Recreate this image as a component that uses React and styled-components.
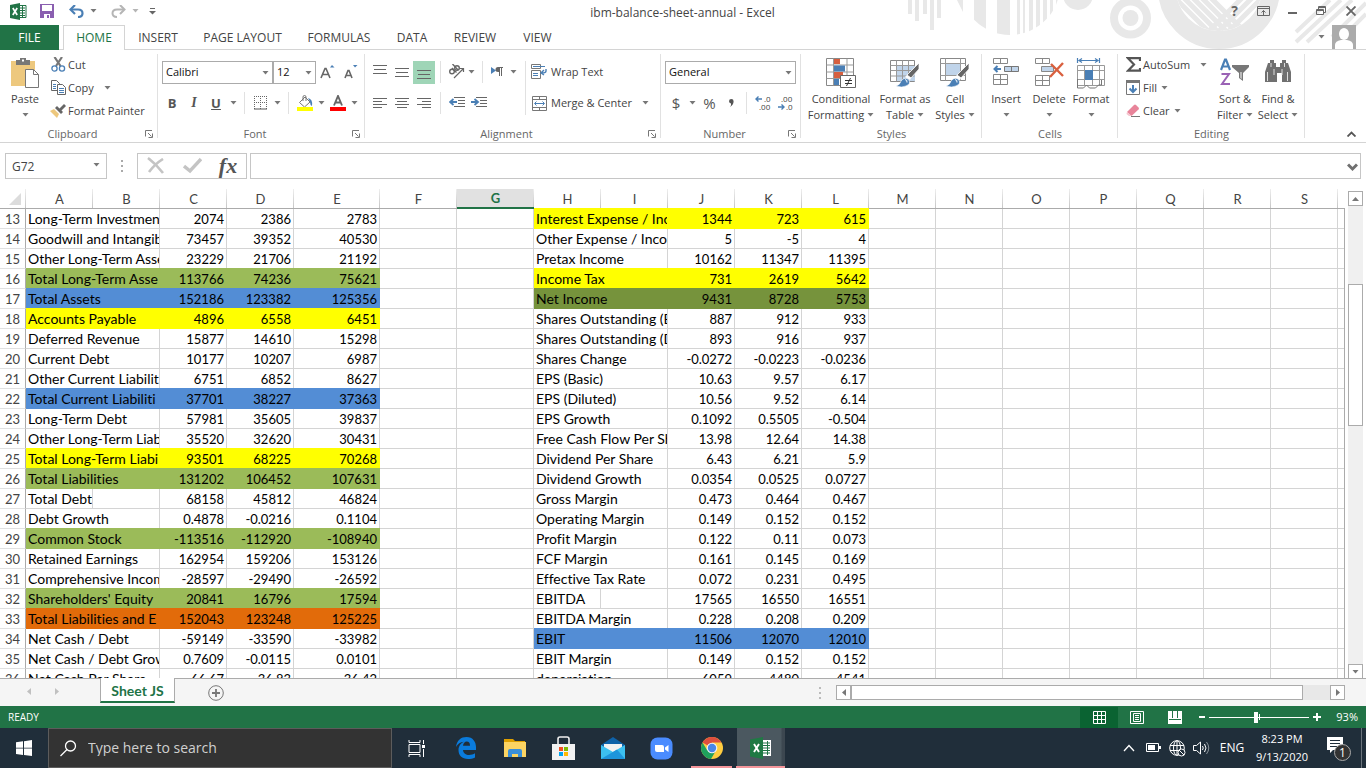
import React from "react";
import styled, { createGlobalStyle, css } from "styled-components";

const GREEN = "#217346";
const GREY = "#777777";
const BLUE = "#4a7fb5";
const UI_FONT = '"Open Sans", "Noto Sans", sans-serif';
const CELL_FONT = 'Lato, "Open Sans", sans-serif';

const GlobalStyle = createGlobalStyle`
  * { box-sizing: border-box; }
  html, body, #root { margin: 0; height: 100%; }
  body { background: #fff; color: #444; font: 11px/16px ${UI_FONT}; overflow: hidden; }
  button, select, input { font: inherit; color: inherit; margin: 0; padding: 0; border: 0; background: none; border-radius: 0; }
  svg { display: block; flex: none; }
`;

const Window = styled.div`
  display: flex;
  flex-direction: column;
  min-height: 100%;
  height: 100vh;
`;

/* ---------- window header ---------- */
const Header = styled.header`
  position: relative;
  flex: none;
  isolation: isolate;
`;
const HeaderArt = styled.svg`
  position: absolute;
  right: 0;
  top: 0;
  z-index: -1;
`;
const TitleBar = styled.div`
  display: grid;
  grid-template-columns: 1fr auto 1fr;
  align-items: center;
  height: 25px;
  padding: 0 1px 0 0;
`;
const QuickAccess = styled.div`
  display: flex;
  align-items: center;
  height: 22px;
  margin-bottom: 3px;
  padding-left: 10px;
`;
const QuickButton = styled.button`
  display: flex;
  align-items: center;
  gap: 6px;
  margin-right: ${(p) => p.$after}px;
`;
const Title = styled.h1`
  margin: 0;
  font: 400 12px/24px ${UI_FONT};
`;
const WindowButtons = styled.div`
  display: flex;
  justify-content: flex-end;
  height: 22px;
  margin-bottom: 3px;
`;
const WindowButton = styled.button`
  width: 29px;
  display: flex;
  align-items: center;
  justify-content: center;
  font-weight: 700;
  font-size: 14px;
  color: #666;
`;
const TabRow = styled.nav`
  display: flex;
  height: 25px;
  border-bottom: 1px solid #d4d4d4;
`;
const FileTab = styled.button`
  width: 59px;
  height: 25px;
  background: ${GREEN};
  color: #fff;
  font-size: 12px;
`;
const RibbonTab = styled.button`
  width: ${(p) => p.$w}px;
  height: 25px;
  font-size: 12px;
  white-space: nowrap;
  ${(p) =>
    p.$active &&
    css`
      margin: 0 0 0 4px;
      color: ${GREEN};
      background: #fff;
      border: 1px solid #d4d4d4;
      border-bottom: 0;
    `}
`;
const Account = styled.button`
  margin-left: auto;
  margin-right: 10px;
  height: 24px;
  display: flex;
  align-items: center;
  gap: 7px;
`;

/* ---------- ribbon ---------- */
const Ribbon = styled.div`
  display: flex;
  flex: none;
  height: 93px;
  border-bottom: 1px solid #d4d4d4;
`;
const Group = styled.section`
  width: ${(p) => p.$w}px;
  flex: none;
  display: flex;
  flex-direction: column;
  padding-top: 3px;
  background: linear-gradient(#e1e1e1, #e1e1e1) no-repeat right center / 1px 84px;
`;
const GroupBody = styled.div`
  display: flex;
  flex: none;
  height: 73px;
  padding-left: ${(p) => p.$pl || 0}px;
`;
const GroupFoot = styled.div`
  display: flex;
  align-items: center;
  height: 16px;
  color: #666;
`;
const GroupName = styled.span`
  flex: 1;
  text-align: center;
`;
const Launcher = styled.button`
  width: 13px;
`;
const RibbonEnd = styled.div`
  flex: 1;
  display: flex;
  justify-content: flex-end;
  align-items: flex-end;
  padding: 0 10px 5px 0;
`;
const BigButton = styled.button`
  width: ${(p) => p.$w}px;
  display: flex;
  flex-direction: column;
  align-items: center;
  padding-top: 5px;
  white-space: nowrap;
`;
const BigIcon = styled.span`
  height: 33px;
`;
const BigLine = styled.span`
  display: flex;
  align-items: center;
  gap: 3px;
  height: 16px;
`;
const SmallColumn = styled.div`
  display: flex;
  flex-direction: column;
  align-items: flex-start;
  width: ${(p) => p.$w}px;
`;
const SmallButton = styled.button`
  display: flex;
  align-items: center;
  gap: ${(p) => p.$gap || 2}px;
  height: ${(p) => p.$h || 23}px;
  white-space: nowrap;
`;
const SmallLabel = styled.span`
  display: flex;
  align-items: center;
  gap: ${(p) => (p.$far ? 10 : 4)}px;
`;
const IconSlot = styled.span`
  width: 16px;
  display: flex;
  justify-content: center;
`;
const ToolRows = styled.div`
  display: flex;
  flex-direction: column;
  gap: 7px;
  padding-top: 7px;
`;
const ToolRow = styled.div`
  display: flex;
  align-items: center;
  height: 24px;
`;
const Tool = styled.button`
  width: ${(p) => p.$w || 22}px;
  height: 23px;
  display: flex;
  align-items: center;
  justify-content: center;
  font-size: ${(p) => p.$size || 13}px;
  font-weight: ${(p) => p.$weight || 400};
  color: #555;
  background: ${(p) => (p.$active ? "#9fd5b7" : "none")};
`;
const SerifMark = styled.i`
  font-family: "Liberation Serif", serif;
`;
const Divider = styled.span`
  width: 1px;
  height: ${(p) => p.$h || 22}px;
  margin: ${(p) => p.$mt || 0}px 5px 0;
  background: #e1e1e1;
`;
const SelectBox = styled.label`
  position: relative;
  width: ${(p) => p.$w}px;
  height: 23px;
  margin-left: ${(p) => p.$ml || 0}px;
  svg { position: absolute; right: 4px; top: 10px; pointer-events: none; }
`;
const Select = styled.select`
  appearance: none;
  width: 100%;
  height: 100%;
  padding-left: 3px;
  border: 1px solid #ababab;
  background: #fff;
  color: #111;
`;

/* ---------- formula bar ---------- */
const FormulaBar = styled.div`
  display: flex;
  flex: none;
  align-items: center;
  height: 46px;
  padding: 0 5px;
`;
const NameBox = styled.label`
  position: relative;
  width: 102px;
  height: 26px;
  svg { position: absolute; right: 7px; top: 10px; }
`;
const NameInput = styled.input`
  width: 100%;
  height: 100%;
  padding-left: 6px;
  border: 1px solid #c6c6c6;
  font-size: 12px;
`;
const Grip = styled.span`
  width: 30px;
  display: flex;
  justify-content: center;
`;
const FormulaTools = styled.div`
  width: 110px;
  height: 26px;
  display: flex;
  border: 1px solid #c6c6c6;
`;
const FormulaInputBox = styled.label`
  position: relative;
  flex: 1;
  height: 26px;
  margin-left: 3px;
  svg { position: absolute; right: 3px; top: 10px; }
`;
const FormulaInput = styled.input`
  width: 100%;
  height: 100%;
  border: 1px solid #c6c6c6;
`;

/* ---------- worksheet ---------- */
const SheetArea = styled.main`
  flex: 1;
  min-height: 0;
  display: flex;
  border-bottom: 1px solid #ababab;
`;
const GridWrap = styled.div`
  flex: 1;
  min-width: 0;
  overflow: hidden;
  background: linear-gradient(#ababab, #ababab) no-repeat right 19px / 1px 100%;
  padding-right: 1px;
`;
const Grid = styled.table`
  width: 100%;
  table-layout: fixed;
  border-collapse: separate;
  border-spacing: 0;
  font: 13px/19px ${CELL_FONT};
  font-variant-ligatures: none;
  color: #000;
`;
const ColHead = styled.th`
  height: 20px;
  padding: 1px 0 0;
  font-weight: ${(p) => (p.$active ? 700 : 400)};
  line-height: 17px;
  color: ${(p) => (p.$active ? GREEN : "#444")};
  border-bottom: ${(p) => (p.$active ? `2px solid ${GREEN}` : "1px solid #ababab")};
  background: linear-gradient(#eee, #c6c6c6) no-repeat right top / ${(p) => (p.$last ? 0 : 1)}px 100%;
  background-color: ${(p) => (p.$active ? "#e1e1e1" : "#fff")};
`;
const RowHead = styled.th`
  height: 20px;
  padding: 1px 0 0;
  line-height: 18px;
  font-weight: 400;
  color: #444;
  border-right: 1px solid #ababab;
  border-bottom: 1px solid #e1e1e1;
`;
const Cell = styled.td`
  height: 20px;
  padding: 1px 2px 0;
  line-height: 18px;
  overflow: hidden;
  white-space: nowrap;
  font-size: ${(p) => (p.$num ? 13 : 14)}px;
  text-align: ${(p) => (p.$num ? "right" : "left")};
  border-right: ${(p) => (p.$last ? 0 : 1)}px solid ${(p) => p.$fill || "#d4d4d4"};
  border-bottom: 1px solid ${(p) => p.$fill || "#d4d4d4"};
  ${(p) =>
    p.$fill &&
    css`
      background: ${p.$fill};
      box-shadow: 0 -1px 0 ${p.$fill};
    `}
`;
const VScroll = styled.div`
  width: 15px;
  margin: 2px 3px -1px;
  display: flex;
  flex-direction: column;
  background: #f0f0f0;
`;
const ScrollButton = styled.button`
  width: 15px;
  height: 15px;
  flex: none;
  display: flex;
  align-items: center;
  justify-content: center;
  border: 1px solid #ababab;
  background: #fff;
`;
const VBefore = styled.div`
  flex: 78;
`;
const VThumb = styled.div`
  flex: 141;
  border: 1px solid #ababab;
  background: #fff;
`;
const VAfter = styled.div`
  flex: 239;
`;

/* ---------- sheet tabs ---------- */
const TabBar = styled.div`
  flex: none;
  display: flex;
  height: 27px;
  background: #f5f5f5;
`;
const TabArrows = styled.div`
  width: 100px;
  display: flex;
  align-items: center;
  gap: 24px;
  padding: 0 0 2px 27px;
`;
const SheetTab = styled.button`
  position: relative;
  width: 75px;
  height: 25px;
  margin-top: -1px;
  padding-top: 2px;
  background: #fff;
  border: 1px solid #ababab;
  border-top: 0;
  border-bottom: 2px solid ${GREEN};
  font: 700 14px/20px ${CELL_FONT};
  color: ${GREEN};
`;
const AddSheet = styled.button`
  width: 16px;
  margin-left: 33px;
`;
const HScroll = styled.div`
  margin-left: auto;
  margin-right: 21px;
  width: 39%;
  height: 15px;
  margin-top: 6px;
  display: flex;
  background: #e8e8e8;
`;
const HThumb = styled.div`
  flex: 1;
  margin-right: 27px;
  background: #fff;
  border: 1px solid #ababab;
`;
const HGrip = styled.span`
  width: 24px;
  padding-left: 7px;
  background: #f5f5f5;
`;

/* ---------- status bar ---------- */
const StatusBar = styled.div`
  flex: none;
  display: flex;
  align-items: center;
  height: 22px;
  padding: 0 8px;
  background: ${GREEN};
  color: #fff;
`;
const StatusText = styled.span`
  margin-right: auto;
  font-size: 10px;
`;
const ViewButton = styled.button`
  width: 38px;
  height: 21px;
  display: flex;
  align-items: center;
  justify-content: center;
  background: ${(p) => (p.$active ? "#0a6332" : "none")};
`;
const ZoomButton = styled.button`
  width: 15px;
  display: flex;
  justify-content: center;
`;
const ZoomRange = styled.input`
  appearance: none;
  width: 100px;
  height: 12px;
  background:
    linear-gradient(#fff, #fff) no-repeat center / 1px 6px,
    linear-gradient(#fff, #fff) no-repeat center / 100% 1px;
  &::-webkit-slider-thumb {
    appearance: none;
    width: 4px;
    height: 11px;
    background: #fff;
  }
`;
const ZoomLevel = styled.span`
  width: 34px;
  text-align: right;
`;

/* ---------- taskbar ---------- */
const Taskbar = styled.footer`
  flex: none;
  display: flex;
  height: 40px;
  background: #202e3a;
  color: #fff;
`;
const StartButton = styled.button`
  width: 48px;
  display: flex;
  align-items: center;
  justify-content: center;
`;
const SearchBox = styled.label`
  width: 344px;
  display: flex;
  align-items: center;
  gap: 11px;
  padding-left: 11px;
  background: #333;
  border: 1px solid #5c5c5c;
`;
const SearchInput = styled.input`
  flex: 1;
  min-width: 0;
  font-size: 14px;
  &::placeholder { color: #d0d0d0; opacity: 1; }
`;
const TaskButton = styled.button`
  width: 49px;
  display: flex;
  align-items: center;
  justify-content: center;
  background: ${(p) => (p.$active ? "linear-gradient(90deg, #4b5860 44px, #3c4750 45px) no-repeat 1px 0 / 48px 100%" : "none")};
  ${(p) => p.$open && css`box-shadow: inset 0 -2px 0 #f4959a;`}
`;
const OpenButton = styled(TaskButton)`
  width: 41px;
  margin: 0 4px 0 5px;
`;
const Tray = styled.div`
  margin-left: auto;
  display: flex;
  align-items: center;
`;
const TrayButton = styled.button`
  width: 24px;
  display: flex;
  justify-content: center;
`;
const Language = styled.button`
  width: 38px;
  font-size: 12px;
`;
const Clock = styled.button`
  width: 62px;
  text-align: center;
  line-height: 18px;
`;
const NoticeButton = styled.button`
  width: 48px;
  padding-left: 4px;
  display: flex;
  justify-content: center;
`;
const ShowDesktop = styled.button`
  width: 5px;
  height: 40px;
  border-left: 1px solid #6b747c;
`;

/* ---------- small drawings ---------- */
const Caret = ({ c = GREY }) => (
  <svg width="7" height="4" viewBox="0 0 7 4"><path d="M0.500 0h6L3.500 3.500z" fill={c} /></svg>
);
const CaretTool = ({ w = 11, label }) => (
  <Tool $w={w} aria-label={label}><Caret /></Tool>
);
const Svg = ({ w, h = w, children }) => (
  <svg width={w} height={h} viewBox={`0 0 ${w} ${h}`} fill="none">{children}</svg>
);
const ExcelIcon = () => (
  <Svg w={17} h={17}>
    <path d="M9 2.500h7v12H9z" fill="#fff" stroke={GREEN} />
    <path d="M10 5h5M10 7.500h5M10 10h5M10 12.500h5M12.500 3v11" stroke={GREEN} />
    <path d="M0 2l10-2v17L0 15z" fill={GREEN} />
    <path d="M2.800 5l4.400 7M7.200 5l-4.400 7" stroke="#fff" strokeWidth="1.700" />
  </Svg>
);
const SaveIcon = () => (
  <Svg w={14}>
    <path d="M0 0h14v14H0z" fill="#8a5fb0" />
    <path d="M2 1h10v6H2zM4 10h6v4H4z" fill="#fff" />
    <path d="M7 11h2v3H7z" fill="#8a5fb0" />
  </Svg>
);
const UndoIcon = ({ c }) => (
  <Svg w={15} h={13}>
    <path d="M2 4.500h7c3 0 4.500 1.800 4.500 3.800S12 12 9 12" stroke={c} strokeWidth="2.200" />
    <path d="M6 0L1.500 4.500L6 9" stroke={c} strokeWidth="2.200" />
  </Svg>
);
const RedoIcon = ({ c }) => (
  <Svg w={15} h={13}>
    <path d="M13 4.500H6C3 4.500 1.500 6.300 1.500 8.300S3 12 6 12" stroke={c} strokeWidth="2" />
    <path d="M9 0l4.500 4.500L9 9" stroke={c} strokeWidth="2" />
  </Svg>
);
const Lines = ({ rows }) => (
  <Svg w={14} h={14}>
    {rows.map(([x1, x2, y]) => <path key={y} d={`M${x1} ${y}.5H${x2}`} stroke="#666" />)}
  </Svg>
);
const LauncherIcon = () => (
  <Svg w={8}><path d="M.5 6.500V.5H7M3 3l3.500 3.500M7.500 3.500v4h-4" stroke={GREY} /></Svg>
);
const PasteIcon = () => (
  <Svg w={30} h={32}>
    <path d="M1 3h24v25H1z" fill="#edc87e" />
    <path d="M6 2h4V0h6v2h4v5H6z" fill="#777" />
    <path d="M12 1.500h2v2h-2z" fill="#fff" />
    <path d="M15.500 11.500h8l5 5v13h-13z" fill="#fff" stroke="#777" />
    <path d="M23.500 11.500v5h5" stroke="#777" />
  </Svg>
);
const CutIcon = () => (
  <Svg w={15} h={15}>
    <path d="M3.500 0l6 9M11 0L5 9" stroke="#777" strokeWidth="2.200" />
    <circle cx="3.500" cy="11.500" r="2.600" stroke={BLUE} strokeWidth="1.300" />
    <circle cx="11" cy="11.500" r="2.600" stroke={BLUE} strokeWidth="1.300" />
  </Svg>
);
const CopyIcon = () => (
  <Svg w={15} h={15}>
    <path d="M.5.5h5l3 3v7h-8z" stroke="#666" fill="#fff" />
    <path d="M2 4.500h3M2 6.500h3M2 8.500h3" stroke={BLUE} />
    <path d="M6.500 4.500h5l3 3v7h-8z" stroke="#666" fill="#fff" />
    <path d="M8 8.500h5M8 10.500h5M8 12.500h5" stroke={BLUE} />
  </Svg>
);
const PainterIcon = () => (
  <Svg w={16} h={14}>
    <path d="M0 7l4-2 5 5-2 4z" fill="#edc87e" />
    <path d="M5 4l2-2 6 6-2 2z" fill="#666" />
    <path d="M9 5l5-5 2 2-5 5z" fill="#666" />
  </Svg>
);
const GrowFont = ({ up }) => (
  <Svg w={16} h={16}>
    {up ? (
      <>
        <path d="M1 14L5 4.500h1L10 14M3 10.500h5" stroke="#666" strokeWidth="1.600" />
        <path d="M10 3.500L12 1l2.500 2.500z" fill={BLUE} />
      </>
    ) : (
      <>
        <path d="M2 14L5 6.500h1L9 14M3.500 11.500h4" stroke="#666" strokeWidth="1.600" />
        <path d="M10 1h4.500L12 3.500z" fill={BLUE} />
      </>
    )}
  </Svg>
);
const BordersIcon = () => (
  <Svg w={14}>
    <path d="M.5 0v13M6.500 0v13M12.500 0v13M0 .5h13M0 6.500h13" stroke="#666" strokeDasharray="1 1" />
    <path d="M0 13h13" stroke="#555" />
  </Svg>
);
const BucketIcon = () => (
  <Svg w={16} h={16}>
    <path d="M2.500 7.500L8 2l5 5-5.500 5z" stroke="#777" fill="#fff" />
    <path d="M6 6V2q0-1.500 1.500-1.500T9 2v4" stroke="#777" />
    <path d="M11 3q5 1 4 8-2-1-2-4z" fill={BLUE} />
    <path d="M0 12h16v4H0z" fill="#ff0" />
  </Svg>
);
const FontColorIcon = () => (
  <Svg w={16} h={16}>
    <path d="M4 10.500L8 1l4 9.500M5.500 7.500h5" stroke="#666" strokeWidth="1.900" />
    <path d="M0 12h16v4H0z" fill="#f00" />
  </Svg>
);
const OrientIcon = () => (
  <Svg w={17} h={16}>
    <circle cx="4" cy="7.500" r="2.300" stroke="#666" strokeWidth="1.400" />
    <path d="M4 4l4.500 4.500" stroke="#666" strokeWidth="1.400" />
    <circle cx="9" cy="4" r="2.300" stroke="#666" strokeWidth="1.400" />
    <path d="M4.500 0l5.500 6" stroke="#666" strokeWidth="1.400" />
    <path d="M6 14l9-9M11.500 4.500h4V8" stroke="#666" strokeWidth="1.200" />
  </Svg>
);
const DirectionIcon = () => (
  <Svg w={14} h={12}>
    <path d="M1 1l5 3.500L1 8z" fill={BLUE} />
    <path d="M9 1h-1a2 2 0 000 5h1z" fill="#666" />
    <path d="M9.500 1v9M11.500 1v9M8 1.500h5" stroke="#666" />
  </Svg>
);
const IndentIcon = ({ out }) => (
  <Svg w={17} h={12}>
    <path d="M5 .5h11M9 3.500h7M9 6.500h7M5 9.500h11" stroke="#666" />
    {out ? <path d="M8 5H2M4.500 2L1 5l3.500 3" stroke={BLUE} strokeWidth="1.800" /> : <path d="M0 5h6M3.500 2L7 5 3.500 8" stroke={BLUE} strokeWidth="1.800" />}
  </Svg>
);
const WrapIcon = () => (
  <Svg w={16} h={16}>
    <path d="M.5.5h9v4h-9zM.5 6.500h9v8h-9z" stroke="#777" />
    <path d="M2 2.500h12M2 9.500h5M2 11.500h5" stroke={BLUE} />
    <path d="M15 5v2q0 2-4 2M13 6l-3 3 3 2" stroke={BLUE} strokeWidth="1.400" />
  </Svg>
);
const MergeIcon = () => (
  <Svg w={15} h={15}>
    <path d="M.5.5h14v14H.5zM.5 3.500h14M.5 11.500h14M7.500.5v3M7.500 11.500v3" stroke="#777" />
    <path d="M3 7.500h9M4.500 5.500l-2 2 2 2M10.500 5.500l2 2-2 2" stroke={BLUE} />
  </Svg>
);
const DecimalText = styled.text`
  font: 8px/8px ${UI_FONT};
  fill: #444;
`;
const DecimalIcon = ({ more }) => (
  <Svg w={18} h={20}>
    <DecimalText x={more ? 10 : 5} y="9">{more ? ".0" : ".00"}</DecimalText>
    <DecimalText x={more ? 5 : 10} y="17">{more ? ".00" : ".0"}</DecimalText>
    {more ? <path d="M8 6H2M4.500 3.500L2 6l2.500 2.500" stroke={BLUE} strokeWidth="1.400" /> : <path d="M2 14h6M5.500 11.500L8 14l-2.500 2.500" stroke={BLUE} strokeWidth="1.400" />}
  </Svg>
);
const CondIcon = () => (
  <Svg w={30} h={31}>
    <path d="M.5.5h27v27H.5z" fill="#fff" stroke="#888" />
    <path d="M.5 7h27M.5 14h27M.5 20.500h27M7.500.5v27M21 .5v27" stroke="#999" />
    <path d="M8 1h6v5H8zM8 14h9v6H8z" fill="#d65f3f" />
    <path d="M8 7.500h11v6H8zM8 21h5v6H8z" fill={BLUE} />
    <path d="M14.500 17.500h15v12h-15z" fill="#fff" stroke="#666" />
    <path d="M19 22.500h7M19 25.500h7M24.500 20l-4 8" stroke="#333" />
  </Svg>
);
const Brush = () => (
  <>
    <path d="M29 5v6l-8 9-4-3z" fill="#666" stroke="#fff" strokeWidth=".8" />
    <path d="M17 17l4 3-1 2-5-3z" fill="#fff" />
    <path d="M6 28q4-1 5-5 4-5 8-1 2 4-3 6-4 2-10 0z" fill={BLUE} stroke="#fff" strokeWidth=".6" />
    <path d="M15 21.500q2.500.5 2 3" stroke="#fff" />
  </>
);
const TableStyleIcon = () => (
  <Svg w={30} h={31}>
    <path d="M.5 2.500h24v21H.5z" fill="#fff" stroke="#888" />
    <path d="M7 8h18v15H7z" fill="#c0d4ea" />
    <path d="M.5 7.500h24M.5 12.500h24M.5 18h24M6.500 2.500v21M12.500 2.500v21M18.500 2.500v21" stroke="#999" />
    <Brush />
  </Svg>
);
const CellStyleIcon = () => (
  <Svg w={30} h={31}>
    <path d="M.5.5h25v22H.5z" fill="#fff" stroke="#888" />
    <path d="M6 6h14v11H6z" fill="#c0d4ea" />
    <path d="M.5 5.500h25M.5 17.500h25M5.500.5v22M20.500.5v22" stroke="#999" />
    <Brush />
  </Svg>
);
const InsertIcon = () => (
  <Svg w={28} h={31}>
    <path d="M1.500.5h14v5h-14zM8.500.5v5M1.500 16.500h14v10h-14zM8.500 16.500v10M1.500 21.500h14" stroke="#888" />
    <path d="M12.500 8.500h14v5h-14z" fill="#c0d4ea" stroke="#777" />
    <path d="M19.500 8.500v5" stroke="#777" />
    <path d="M9 11H3M5.500 8L2.500 11l3 3" stroke={BLUE} strokeWidth="2" />
  </Svg>
);
const DeleteIcon = () => (
  <Svg w={30} h={31}>
    <path d="M1.500.5h14v5h-14zM8.500.5v5M1.500 17.500h14v10h-14zM8.500 17.500v10M1.500 22.500h14" stroke="#888" />
    <path d="M7.500 8.500h12v5h-12z" fill="#c0d4ea" stroke="#888" />
    <path d="M17 6l12 12M29 5L16 19" stroke="#d9603f" strokeWidth="2.400" />
  </Svg>
);
const FormatIcon = () => (
  <Svg w={30} h={32}>
    <path d="M1.500 0v5M23.500 0v5M3 2.500h19M6 .5l-3 2 3 2M19 .5l3 2-3 2" stroke={BLUE} strokeWidth="1.200" />
    <path d="M1.500 7.500h27v20h-27zM1.500 12.500h27M1.500 21.500h27M8.500 7.500v20M16.500 7.500v20M23.500 7.500v20" stroke="#999" />
    <path d="M9 12h8v10H9z" fill={BLUE} />
    <path d="M1.500 21v9h6l3-3 3 3h6l3-3h3v-5" stroke="#777" />
  </Svg>
);
const SigmaIcon = () => (
  <Svg w={15} h={15}><path d="M14 4V1.200H2L8 7.500 2 13.700h12V11" stroke="#555" strokeWidth="2.200" /></Svg>
);
const FillIcon = () => (
  <Svg w={15} h={16}>
    <path d="M.5.5h13v14H.5z" stroke="#777" fill="#fff" />
    <path d="M0 0h14v3H0z" fill="#777" />
    <path d="M7 5v7M3.500 8.500L7 12l3.500-3.500" stroke={BLUE} strokeWidth="2" />
  </Svg>
);
const EraserIcon = () => (
  <Svg w={15} h={14}>
    <path d="M1 8L8 1q1-1 2 0l2.500 2.500q1 1 0 2L5.500 12z" fill="#e8849a" />
    <path d="M1 8l4.500 4H3L.5 10z" fill="#f5c3cd" />
    <path d="M5 12.500h9" stroke="#777" />
  </Svg>
);
const SortIcon = () => (
  <Svg w={30} h={30}>
    <path d="M1 12L5 1.500h1L10 12M2.800 8.500h5.400" stroke={BLUE} strokeWidth="2.200" />
    <path d="M1.500 16H9L2 26h8" stroke="#9a62b5" strokeWidth="2" />
    <path d="M12 7h17v2l-6 6v8l-4-3v-5l-7-6z" fill="#777" />
    <path d="M20.500 14v6l1 1v-7z" fill="#fff" />
  </Svg>
);
const FindIcon = () => (
  <Svg w={28} h={27}>
    <path d="M6 2h4v3h2v4h4V5h2V2h4v3h2l3 9v10h-9v-9h-5v9H1V14l3-9h2z" fill="#707070" />
    <path d="M7 5v4M3.500 14v9M23.500 14v9M20.500 5v4M10 11v6M18 11v6" stroke="#ddd" />
  </Svg>
);
const WindowsLogo = () => (
  <Svg w={16} h={16}><path d="M0 2.200l7-.9v6.400H0zM8 1.200L16 0v7.700H8zM0 8.600h7V15l-7-1zM8 8.600h8V16l-8-1.100z" fill="#fff" /></Svg>
);
const EdgeIcon = () => (
  <Svg w={20} h={22}>
    <path d="M0 10C1 3 5 0 10.500 0 17 0 20 5 20 10v3H7c.3 3.500 3 5 6 5 2.300 0 4.400-.7 6-1.700v4.200C17 21.500 14.500 22 12 22 6 22 2.500 18.500 2.500 13c0-4 2.500-7 5.500-8.200C4.500 5 1.500 7 0 10zm7-1.200h7C14 6 12.800 4.600 10.800 4.600 8.800 4.600 7.300 6.500 7 8.800z" fill="#0a7bdc" />
  </Svg>
);
const FolderIcon = () => (
  <Svg w={22} h={19}>
    <path d="M0 0h9l2 2h10v6H0z" fill="#dfa000" />
    <path d="M0 3h22v15H0z" fill="#fcd462" />
    <path d="M4 18v-6q0-2 2-2h10q2 0 2 2v6h-4v-3H8v3z" fill="#3a8fd8" />
  </Svg>
);
const StoreIcon = () => (
  <Svg w={24} h={25}>
    <path d="M6 8V3q0-2 2-2h7q2 0 2 2v5" stroke="#eee" strokeWidth="1.600" />
    <path d="M0 8h23v16H0z" fill="#f2f2f2" />
    <path d="M7 11h4v4H7z" fill="#f25022" /><path d="M12 11h4v4h-4z" fill="#7fba00" />
    <path d="M7 16h4v4H7z" fill="#00a4ef" /><path d="M12 16h4v4h-4z" fill="#ffb900" />
  </Svg>
);
const MailIcon = () => (
  <Svg w={24} h={23}>
    <path d="M0 8l12-8 12 8v14H0z" fill="#0f62a8" />
    <path d="M3 7h18v6l-9 4-9-4z" fill="#f2f2f2" />
    <path d="M0 8l12 7 12-7v14H0z" fill="#3cc0f0" />
    <path d="M0 22L16 12.500 24 22z" fill="#1e95dc" />
  </Svg>
);
const ZoomIcon = () => (
  <Svg w={23} h={23}>
    <rect width="22" height="22" x=".5" y=".5" rx="7" fill="#4a8cff" />
    <path d="M5 8h7q2 0 2 2v5H7q-2 0-2-2zM15 10.500L18.500 8v7L15 12.500z" fill="#fff" />
  </Svg>
);
const ChromeIcon = () => (
  <Svg w={22} h={22}>
    <circle cx="11" cy="11" r="11" fill="#ffcd40" />
    <path d="M11 11L1.500 5.500A11 11 0 0120.500 5.500H11z" fill="#de4f3e" />
    <path d="M1.500 5.500A11 11 0 0010 22l5-8.500L11 11 6 13z" fill="#1fa15d" />
    <circle cx="11" cy="11" r="5.300" fill="#f3f3f3" />
    <circle cx="11" cy="11" r="4.200" fill="#4a86e8" />
  </Svg>
);
const TaskExcel = () => (
  <Svg w={22} h={22}>
    <path d="M11 3h10v16H11z" fill="#fff" />
    <path d="M13 6h7M13 8.500h7M13 11h7M13 13.500h7M13 16h7M17.500 4v14" stroke={GREEN} />
    <path d="M0 2.500L13 0v22L0 19.500z" fill="#1f7a44" />
    <path d="M4 7l5 8M9 7l-5 8" stroke="#fff" strokeWidth="1.900" />
  </Svg>
);

const Art = () => (
  <HeaderArt width="466" height="49" viewBox="900 0 466 49" fill="#e8e8e8" aria-hidden="true">
    <defs>
      <clipPath id="disc"><circle cx="1010" cy="-15" r="50" /></clipPath>
      <clipPath id="hole"><circle cx="1219" cy="-12" r="43" /></clipPath>
    </defs>
    <path d="M908 0h4v14h-4zM915 0h4v21h-4zM923 0h4v14h-4zM930 0h4v30h-4zM937 0h4v18h-4zM957 0h6v12z" />
    <g clipPath="url(#disc)">
      <path d="M974 0h12v40h-12zM997 0h13v40h-13zM1017 0h3v40h-3zM1023 0h2v40h-2zM1029 0h4v40h-4zM1036 0h4v40h-4zM1043 0h4v40h-4zM1050 0h3v40h-3zM1056 0h2v40h-2z" />
    </g>
    <circle cx="1078" cy="-5" r="15" />
    <circle cx="1130.500" cy="18" r="16.500" fill="none" stroke="#e8e8e8" strokeWidth="8" />
    <circle cx="1130.500" cy="18" r="8" />
    <circle cx="1219" cy="-12" r="52" fill="none" stroke="#e8e8e8" strokeWidth="18" />
    <g clipPath="url(#hole)" stroke="#e8e8e8" strokeWidth="5">
      <path d="M1165-12l50 50M1174-12l50 50M1183-12l50 50M1192-12l50 50M1201-12l50 50" />
      <path d="M1262-12l-50 50M1272-12l-50 50M1252-12l-50 50" />
    </g>
    <path d="M1341 0l-45 42M1352 0l-45 42M1330 0l-34 32M1366 3l-34 34M1366 14l-22 22" stroke="#e8e8e8" strokeWidth="4" />
  </HeaderArt>
);

/* ---------- data ---------- */
const Y = "#ffff00", G = "#9bbb59", B = "#538dd5", D = "#76933c", O = "#e26b0a";
const ROWS = [
  [13, "Long-Term Investments", ["2074", "2386", "2783"], null, "Interest Expense / Income", ["1344", "723", "615"], Y],
  [14, "Goodwill and Intangibles", ["73457", "39352", "40530"], null, "Other Expense / Income", ["5", "-5", "4"], null],
  [15, "Other Long-Term Assets", ["23229", "21706", "21192"], null, "Pretax Income", ["10162", "11347", "11395"], null],
  [16, "Total Long-Term Asse", ["113766", "74236", "75621"], G, "Income Tax", ["731", "2619", "5642"], Y],
  [17, "Total Assets", ["152186", "123382", "125356"], B, "Net Income", ["9431", "8728", "5753"], D],
  [18, "Accounts Payable", ["4896", "6558", "6451"], Y, "Shares Outstanding (Basic)", ["887", "912", "933"], null],
  [19, "Deferred Revenue", ["15877", "14610", "15298"], null, "Shares Outstanding (Diluted)", ["893", "916", "937"], null],
  [20, "Current Debt", ["10177", "10207", "6987"], null, "Shares Change", ["-0.0272", "-0.0223", "-0.0236"], null],
  [21, "Other Current Liabilit", ["6751", "6852", "8627"], null, "EPS (Basic)", ["10.63", "9.57", "6.17"], null],
  [22, "Total Current Liabiliti", ["37701", "38227", "37363"], B, "EPS (Diluted)", ["10.56", "9.52", "6.14"], null],
  [23, "Long-Term Debt", ["57981", "35605", "39837"], null, "EPS Growth", ["0.1092", "0.5505", "-0.504"], null],
  [24, "Other Long-Term Liab", ["35520", "32620", "30431"], null, "Free Cash Flow Per Share", ["13.98", "12.64", "14.38"], null],
  [25, "Total Long-Term Liabi", ["93501", "68225", "70268"], Y, "Dividend Per Share", ["6.43", "6.21", "5.9"], null],
  [26, "Total Liabilities", ["131202", "106452", "107631"], G, "Dividend Growth", ["0.0354", "0.0525", "0.0727"], null],
  [27, "Total Debt", ["68158", "45812", "46824"], null, "Gross Margin", ["0.473", "0.464", "0.467"], null],
  [28, "Debt Growth", ["0.4878", "-0.0216", "0.1104"], null, "Operating Margin", ["0.149", "0.152", "0.152"], null],
  [29, "Common Stock", ["-113516", "-112920", "-108940"], G, "Profit Margin", ["0.122", "0.11", "0.073"], null],
  [30, "Retained Earnings", ["162954", "159206", "153126"], null, "FCF Margin", ["0.161", "0.145", "0.169"], null],
  [31, "Comprehensive Income", ["-28597", "-29490", "-26592"], null, "Effective Tax Rate", ["0.072", "0.231", "0.495"], null],
  [32, "Shareholders' Equity", ["20841", "16796", "17594"], G, "EBITDA", ["17565", "16550", "16551"], null],
  [33, "Total Liabilities and E", ["152043", "123248", "125225"], O, "EBITDA Margin", ["0.228", "0.208", "0.209"], null],
  [34, "Net Cash / Debt", ["-59149", "-33590", "-33982"], null, "EBIT", ["11506", "12070", "12010"], B],
  [35, "Net Cash / Debt Grow", ["0.7609", "-0.0115", "0.0101"], null, "EBIT Margin", ["0.149", "0.152", "0.152"], null],
  [36, "Net Cash Per Share", ["-66.67", "-36.83", "-36.42"], null, "deperciation", ["6059", "4480", "4541"], null],
];
const FITS_ONE_COLUMN = ["Total Debt", "EBITDA"];
const COLS = "ABCDEFGHIJKLMNOPQRS".split("");
const colWidth = (c) => (c === "E" ? 86 : c === "F" || c === "G" ? 77 : 67);

const LabelCells = ({ text, fill }) =>
  FITS_ONE_COLUMN.includes(text) ? (
    <><Cell>{text}</Cell><Cell /></>
  ) : (
    <Cell colSpan={2} $fill={fill}>{text}</Cell>
  );

const Sheet = () => (
  <Grid>
    <colgroup>
      <col style={{ width: 26 }} />
      {COLS.map((c) => <col key={c} style={{ width: colWidth(c) }} />)}
      <col />
    </colgroup>
    <thead>
      <tr>
        <ColHead><Svg w={22} h={16}><path d="M21 2v12H9z" fill="#dcdcdc" /></Svg></ColHead>
        {COLS.map((c) => <ColHead key={c} $active={c === "G"}>{c}</ColHead>)}
        <ColHead $last />
      </tr>
    </thead>
    <tbody>
      {ROWS.map(([n, left, lv, lf, right, rv, rf]) => (
        <tr key={n}>
          <RowHead>{n}</RowHead>
          <LabelCells text={left} fill={lf} />
          {lv.map((v, i) => <Cell key={i} $num $fill={lf}>{v}</Cell>)}
          <Cell /><Cell />
          <LabelCells text={right} fill={rf} />
          {rv.map((v, i) => <Cell key={i} $num $fill={rf}>{v}</Cell>)}
          {"MNOPQRS".split("").map((c) => <Cell key={c} />)}
          <Cell $last />
        </tr>
      ))}
    </tbody>
  </Grid>
);

const RibbonGroup = ({ name, w, pl, launcher, children }) => (
  <Group $w={w} aria-label={name}>
    <GroupBody $pl={pl}>{children}</GroupBody>
    <GroupFoot>
      <GroupName>{name}</GroupName>
      {launcher && <Launcher aria-label={`${name} settings`}><LauncherIcon /></Launcher>}
    </GroupFoot>
  </Group>
);
const Big = ({ w, icon, one, two, menu }) => (
  <BigButton $w={w}>
    <BigIcon>{icon}</BigIcon>
    <BigLine>{one}</BigLine>
    <BigLine>{two}{menu && <Caret />}</BigLine>
  </BigButton>
);
const Small = ({ icon, text, menu, h, gap, far }) => (
  <SmallButton $h={h} $gap={gap}>
    <IconSlot>{icon}</IconSlot>
    <SmallLabel $far={far}>{text}{menu && <Caret />}</SmallLabel>
  </SmallButton>
);

const LINE_SPANS = [[0, 14], [1, 13], [0, 14]];
const stacked = (top) => LINE_SPANS.map(([a, b], i) => [a, b, top + i * 4]);
const TABS = [["INSERT", 66], ["PAGE LAYOUT", 103], ["FORMULAS", 90], ["DATA", 56], ["REVIEW", 70], ["VIEW", 55]];

export default function App() {
  return (
    <Window>
      <GlobalStyle />
      <Header>
        <Art />
        <TitleBar>
          <QuickAccess>
            <QuickButton $after={13} aria-label="Excel"><ExcelIcon /></QuickButton>
            <QuickButton $after={15} aria-label="Save"><SaveIcon /></QuickButton>
            <QuickButton $after={14} aria-label="Undo"><UndoIcon c={BLUE} /><Caret /></QuickButton>
            <QuickButton $after={10} aria-label="Redo"><RedoIcon c="#b5b5b5" /><Caret c="#b5b5b5" /></QuickButton>
            <QuickButton $after={0} aria-label="Customize"><Svg w={7} h={7}><path d="M1 .5h5" stroke="#666" /><path d="M0 3h7L3.500 6.500z" fill="#666" /></Svg></QuickButton>
          </QuickAccess>
          <Title>ibm-balance-sheet-annual - Excel</Title>
          <WindowButtons>
            <WindowButton>?</WindowButton>
            <WindowButton aria-label="Ribbon options"><Svg w={14} h={10}><path d="M.5.5h12v9H.5zM.5 2.500h12M6.500 9V4.500M4.500 6.500l2-2 2 2" stroke="#666" /></Svg></WindowButton>
            <WindowButton aria-label="Minimize"><Svg w={10} h={8}><path d="M0 6h9" stroke="#666" strokeWidth="2" /></Svg></WindowButton>
            <WindowButton aria-label="Restore"><Svg w={11} h={10}><path d="M.5 3.500h7v5h-7zM.5 4.500h7M2.500 3V.5h7v6H8M2.500 1.500h7" stroke="#666" /></Svg></WindowButton>
            <WindowButton aria-label="Close"><Svg w={10} h={10}><path d="M.5.5l9 9M9.500.5l-9 9" stroke="#666" strokeWidth="1.900" /></Svg></WindowButton>
          </WindowButtons>
        </TitleBar>
        <TabRow>
          <FileTab>FILE</FileTab>
          <RibbonTab $w={62} $active>HOME</RibbonTab>
          {TABS.map(([t, w]) => <RibbonTab key={t} $w={w}>{t}</RibbonTab>)}
          <Account aria-label="Account">
            <Caret />
            <Svg w={24} h={24}>
              <path d="M0 0h24v24H0z" fill="#ababab" />
              <ellipse cx="12" cy="9" rx="5" ry="6" fill="#fff" />
              <path d="M3 24v-4q0-4 6-5h6q6 1 6 5v4z" fill="#fff" />
            </Svg>
          </Account>
        </TabRow>
      </Header>

      <Ribbon>
        <RibbonGroup name="Clipboard" w={158} launcher>
          <Big w={50} icon={<PasteIcon />} one="Paste" menu />
          <SmallColumn $w={104}>
            <Small icon={<CutIcon />} text="Cut" />
            <Small icon={<CopyIcon />} text="Copy" menu far />
            <Small icon={<PainterIcon />} text="Format Painter" />
          </SmallColumn>
        </RibbonGroup>

        <RibbonGroup name="Font" w={207} pl={3} launcher>
          <ToolRows>
            <ToolRow>
              <SelectBox $w={111} $ml={1}><Select aria-label="Font name"><option>Calibri</option></Select><Caret /></SelectBox>
              <SelectBox $w={43}><Select aria-label="Font size"><option>12</option></Select><Caret /></SelectBox>
              <Tool $w={24} aria-label="Increase font size"><GrowFont up /></Tool>
              <Tool aria-label="Decrease font size"><GrowFont /></Tool>
            </ToolRow>
            <ToolRow>
              <Tool $weight={700}>B</Tool>
              <Tool $size={14} $weight={700}><SerifMark>I</SerifMark></Tool>
              <Tool $weight={700}><u>U</u></Tool>
              <CaretTool w={12} label="Underline options" />
              <Divider />
              <Tool aria-label="Borders"><BordersIcon /></Tool>
              <CaretTool label="Border options" />
              <Divider />
              <Tool aria-label="Fill color"><BucketIcon /></Tool>
              <CaretTool label="Fill color options" />
              <Tool aria-label="Font color"><FontColorIcon /></Tool>
              <CaretTool label="Font color options" />
            </ToolRow>
          </ToolRows>
        </RibbonGroup>

        <RibbonGroup name="Alignment" w={296} pl={4} launcher>
          <ToolRows>
            <ToolRow>
              <Tool aria-label="Top align"><Lines rows={stacked(0)} /></Tool>
              <Tool aria-label="Middle align"><Lines rows={stacked(3)} /></Tool>
              <Tool $active aria-label="Bottom align"><Lines rows={stacked(5)} /></Tool>
              <Divider />
              <Tool $w={20} aria-label="Orientation"><OrientIcon /></Tool>
              <CaretTool label="Orientation options" />
              <Divider />
              <Tool $w={18} aria-label="Text direction"><DirectionIcon /></Tool>
              <CaretTool w={14} label="Direction options" />
            </ToolRow>
            <ToolRow>
              <Tool aria-label="Align left"><Lines rows={[[0, 14, 2], [0, 9, 5], [0, 14, 8], [0, 9, 11]]} /></Tool>
              <Tool aria-label="Center"><Lines rows={[[0, 14, 2], [2, 12, 5], [0, 14, 8], [2, 12, 11]]} /></Tool>
              <Tool aria-label="Align right"><Lines rows={[[0, 14, 2], [5, 14, 5], [0, 14, 8], [5, 14, 11]]} /></Tool>
              <Divider />
              <Tool aria-label="Decrease indent"><IndentIcon out /></Tool>
              <Tool aria-label="Increase indent"><IndentIcon /></Tool>
            </ToolRow>
          </ToolRows>
          <Divider $h={54} $mt={8} />
          <ToolRows>
            <Small icon={<WrapIcon />} text="Wrap Text" h={24} gap={4} />
            <Small icon={<MergeIcon />} text="Merge & Center" h={24} gap={4} menu far />
          </ToolRows>
        </RibbonGroup>

        <RibbonGroup name="Number" w={140} pl={4} launcher>
          <ToolRows>
            <ToolRow>
              <SelectBox $w={131}><Select aria-label="Number format"><option>General</option></Select><Caret /></SelectBox>
            </ToolRow>
            <ToolRow>
              <Tool $size={15}>$</Tool>
              <CaretTool label="Currency options" />
              <Tool $w={23} $size={15}>%</Tool>
              <Tool $w={20} aria-label="Comma style"><Svg w={5} h={8}><path d="M0 2.300a2.300 2.300 0 114.600 0Q4.600 6 1 8 2.500 6 2 4.500A2.300 2.300 0 010 2.300z" fill="#555" /></Svg></Tool>
              <Divider />
              <Tool aria-label="Increase decimal"><DecimalIcon more /></Tool>
              <Tool aria-label="Decrease decimal"><DecimalIcon /></Tool>
            </ToolRow>
          </ToolRows>
        </RibbonGroup>

        <RibbonGroup name="Styles" w={181}>
          <Big w={80} icon={<CondIcon />} one="Conditional" two="Formatting" menu />
          <Big w={48} icon={<TableStyleIcon />} one="Format as" two="Table" menu />
          <Big w={52} icon={<CellStyleIcon />} one="Cell" two="Styles" menu />
        </RibbonGroup>

        <RibbonGroup name="Cells" w={136} pl={2}>
          <Big w={44} icon={<InsertIcon />} one="Insert" menu />
          <Big w={42} icon={<DeleteIcon />} one="Delete" menu />
          <Big w={42} icon={<FormatIcon />} one="Format" menu />
        </RibbonGroup>

        <RibbonGroup name="Editing" w={187} pl={7}>
          <SmallColumn $w={89}>
            <Small icon={<SigmaIcon />} text="AutoSum" menu far />
            <Small icon={<FillIcon />} text="Fill" menu />
            <Small icon={<EraserIcon />} text="Clear" menu />
          </SmallColumn>
          <Big w={42} icon={<SortIcon />} one="Sort &" two="Filter" menu />
          <Big w={44} icon={<FindIcon />} one="Find &" two="Select" menu />
        </RibbonGroup>
        <RibbonEnd>
          <button aria-label="Collapse ribbon"><Svg w={9} h={6}><path d="M.5 5.500l4-4 4 4" stroke="#555" strokeWidth="1.800" /></Svg></button>
        </RibbonEnd>
      </Ribbon>

      <FormulaBar>
        <NameBox><NameInput aria-label="Name box" defaultValue="G72" /><Caret /></NameBox>
        <Grip><Svg w={2} h={12}><path d="M0 0h2v2H0zM0 5h2v2H0zM0 10h2v2H0z" fill="#aaa" /></Svg></Grip>
        <FormulaTools>
          <Tool $w={36} aria-label="Cancel"><Svg w={18} h={17}><path d="M1 1q8 6 15 15M16 2Q8 7 2 15" stroke="#c4c4c4" strokeWidth="2.600" /></Svg></Tool>
          <Tool $w={36} aria-label="Enter"><Svg w={19} h={17}><path d="M1 9l6 5L18 2" stroke="#c4c4c4" strokeWidth="3.400" /></Svg></Tool>
          <Tool $w={36} $size={22} $weight={700} aria-label="Insert function"><SerifMark>fx</SerifMark></Tool>
        </FormulaTools>
        <FormulaInputBox>
          <FormulaInput aria-label="Formula" />
          <Svg w={11} h={9}><path d="M1 1.500l4.500 4.500L10 1.500" stroke="#707070" strokeWidth="3" /></Svg>
        </FormulaInputBox>
      </FormulaBar>

      <SheetArea>
        <GridWrap><Sheet /></GridWrap>
        <VScroll>
          <ScrollButton aria-label="Scroll up"><Svg w={7} h={4}><path d="M0 4h7L3.500 0z" fill={GREY} /></Svg></ScrollButton>
          <VBefore /><VThumb /><VAfter />
          <ScrollButton aria-label="Scroll down"><Caret /></ScrollButton>
        </VScroll>
      </SheetArea>

      <TabBar>
        <TabArrows>
          <Svg w={4} h={7}><path d="M4 0v7L0 3.500z" fill="#c0c0c0" /></Svg>
          <Svg w={4} h={7}><path d="M0 0v7l4-3.500z" fill="#c0c0c0" /></Svg>
        </TabArrows>
        <SheetTab>Sheet JS</SheetTab>
        <AddSheet aria-label="New sheet"><Svg w={16}><circle cx="8" cy="8" r="7.300" stroke="#777" /><path d="M8 4v8M4 8h8" stroke="#777" strokeWidth="1.800" /></Svg></AddSheet>
        <HScroll>
          <HGrip><Svg w={2} h={15}><path d="M0 2h2v2H0zM0 7h2v2H0zM0 12h2v2H0z" fill="#bbb" /></Svg></HGrip>
          <ScrollButton aria-label="Scroll left"><Svg w={4} h={7}><path d="M4 0v7L0 3.500z" fill={GREY} /></Svg></ScrollButton>
          <HThumb />
          <ScrollButton aria-label="Scroll right"><Svg w={4} h={7}><path d="M0 0v7l4-3.500z" fill={GREY} /></Svg></ScrollButton>
        </HScroll>
      </TabBar>

      <StatusBar>
        <StatusText>READY</StatusText>
        <ViewButton $active aria-label="Normal view"><Svg w={13}><path d="M.5.5h12v12H.5zM4.500.5v12M8.500.5v12M.5 4.500h12M.5 8.500h12" stroke="#fff" /></Svg></ViewButton>
        <ViewButton aria-label="Page layout view"><Svg w={14} h={13}><path d="M.5.5h13v12H.5zM3.500 2.500h7v8h-7zM5 4.500h4M5 6.500h4M5 8.500h4" stroke="#fff" /></Svg></ViewButton>
        <ViewButton aria-label="Page break view"><Svg w={14} h={13}><path d="M0 0h14v13H0z" fill="#fff" /><path d="M4 0h1v7H4zM9 0h1v7H9zM1 8h12v1H1z" fill={GREEN} /><path d="M5 9h4v3H5z" fill="#fff" /></Svg></ViewButton>
        <ZoomButton aria-label="Zoom out"><Svg w={6} h={8}><path d="M0 4h6" stroke="#fff" strokeWidth="2" /></Svg></ZoomButton>
        <ZoomRange type="range" aria-label="Zoom" min="0" max="100" defaultValue="47" />
        <ZoomButton aria-label="Zoom in"><Svg w={8} h={8}><path d="M0 4h8M4 0v8" stroke="#fff" strokeWidth="2" /></Svg></ZoomButton>
        <ZoomLevel>93%</ZoomLevel>
      </StatusBar>

      <Taskbar>
        <StartButton aria-label="Start"><WindowsLogo /></StartButton>
        <SearchBox>
          <Svg w={17} h={17}><circle cx="10.500" cy="6" r="5" stroke="#fff" strokeWidth="1.300" /><path d="M7 9.500L.5 16" stroke="#fff" strokeWidth="1.300" /></Svg>
          <SearchInput aria-label="Search" placeholder="Type here to search" />
        </SearchBox>
        <TaskButton aria-label="Task view"><Svg w={17} h={17}><path d="M1 4.500h11v8H1zM1 0v2.500h11V0M1 17v-2.500h11V17M15.500 0v4M15.500 9v8" stroke="#fff" /><path d="M14 5h3v3h-3z" fill="#fff" /></Svg></TaskButton>
        <TaskButton aria-label="Edge"><EdgeIcon /></TaskButton>
        <TaskButton aria-label="File Explorer"><FolderIcon /></TaskButton>
        <TaskButton aria-label="Store"><StoreIcon /></TaskButton>
        <TaskButton aria-label="Mail"><MailIcon /></TaskButton>
        <TaskButton aria-label="Zoom"><ZoomIcon /></TaskButton>
        <OpenButton $open aria-label="Chrome"><ChromeIcon /></OpenButton>
        <TaskButton $open $active aria-label="Excel"><TaskExcel /></TaskButton>
        <Tray>
          <TrayButton aria-label="Hidden icons"><Svg w={12} h={8}><path d="M1 7l5-5.500L11 7" stroke="#fff" strokeWidth="1.300" /></Svg></TrayButton>
          <TrayButton aria-label="Battery"><Svg w={15} h={10}><path d="M.5.5h12v8H.5z" stroke="#fff" /><path d="M2 2h7v5H2zM13 3h2v3h-2z" fill="#fff" /></Svg></TrayButton>
          <TrayButton aria-label="Network"><Svg w={17} h={17}><circle cx="8" cy="8" r="7.300" stroke="#fff" /><ellipse cx="8" cy="8" rx="3.500" ry="7.300" stroke="#fff" /><path d="M1 5.500h14M1 10.500h9M8 1v14" stroke="#fff" /><circle cx="12.500" cy="12.500" r="3.500" stroke="#fff" fill="#202e3a" /><path d="M10 10l5 5" stroke="#fff" /></Svg></TrayButton>
          <TrayButton aria-label="Volume"><Svg w={17} h={14}><path d="M.5 4.500h3l4-3.500v12l-4-3.500h-3z" stroke="#fff" /><path d="M9.500 5q1.500 2 0 4M11.500 3q3 4 0 8" stroke="#fff" /><path d="M13.500 1q4.500 6 0 12" stroke="#8a939a" /></Svg></TrayButton>
          <Language>ENG</Language>
          <Clock>8:23 PM<br />9/13/2020</Clock>
          <NoticeButton aria-label="1 notification">
            <Svg w={24} h={25}>
              <path d="M0 1h16v13H6l-3 3v-3H0z" fill="#fff" />
              <path d="M3 4.500h10M3 7.500h10M3 10.500h7" stroke="#202e3a" />
              <circle cx="15.500" cy="16.500" r="8" fill="#333" stroke="#aaa" />
              <text x="12" y="21" fill="#fff" fontSize="12">1</text>
            </Svg>
          </NoticeButton>
          <ShowDesktop aria-label="Show desktop" />
        </Tray>
      </Taskbar>
    </Window>
  );
}
